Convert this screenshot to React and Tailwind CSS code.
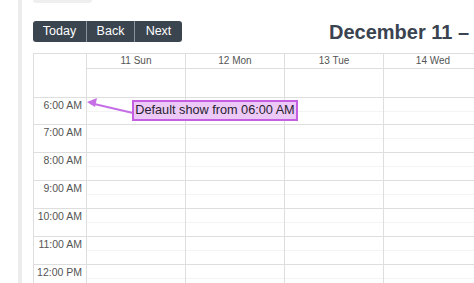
import React from "react";

const days = ["11 Sun", "12 Mon", "13 Tue", "14 Wed"];
const hours = ["6:00 AM", "7:00 AM", "8:00 AM", "9:00 AM", "10:00 AM", "11:00 AM", "12:00 PM"];

export default function App() {
  return (
    <div
      className="relative flex h-[283px] w-[474px] overflow-hidden bg-white"
      style={{ fontFamily: '"Liberation Sans", Arial, sans-serif' }}
    >
      <div className="w-[18px] shrink-0" />
      <div className="w-[4px] shrink-0 bg-[#ececec]" />
      <div className="w-[11px] shrink-0" />

      <div className="min-w-0 flex-1 overflow-hidden">
        <div className="h-[3px] w-[59px] rounded-b bg-[#efefef]" />

        {/* Toolbar */}
        <div className="mt-[18px] flex h-[21px] items-center">
          <div className="flex h-[21px] shrink-0 overflow-hidden rounded-[3px] bg-[#3b4550] text-[12.5px] text-white">
            <button className="w-[54px] shrink-0 border-r border-[#8a939c]">Today</button>
            <button className="w-[48px] shrink-0 border-r border-[#8a939c]">Back</button>
            <button className="w-[47px] shrink-0">Next</button>
          </div>
          <h1 className="ml-[147px] shrink-0 whitespace-nowrap text-[20px] font-bold text-[#3a4350]">
            December 11 – 17
          </h1>
        </div>

        {/* Calendar */}
        <div className="mt-[11px] w-[560px] border-l border-t border-[#dedede]">
          <div className="flex">
            <div className="w-[53px] shrink-0 border-r border-[#dedede]" />
            {days.map((d) => (
              <div key={d} className="w-[99px] shrink-0 border-r border-[#dedede]">
                <div className="h-[15px] border-b border-[#dedede] text-center text-[10px] leading-[14px] text-[#555]">
                  {d}
                </div>
                <div className="h-[28px]" />
              </div>
            ))}
          </div>

          {hours.map((h, i) => (
            <div
              key={h}
              className={`flex border-t border-[#dedede] ${i === 0 ? "h-[27px]" : "h-[28px]"}`}
            >
              <div className="w-[53px] shrink-0 border-r border-[#dedede] pr-[4px] pt-[2px] text-right text-[10.5px] leading-[11px] text-[#555]">
                {h}
              </div>
              {days.map((d) => (
                <div key={d} className="flex w-[99px] shrink-0 flex-col border-r border-[#dedede]">
                  <div className="h-[14px] border-b border-[#f4f4f4]" />
                  <div className="flex-1" />
                </div>
              ))}
            </div>
          ))}
        </div>
      </div>

      {/* Annotation */}
      <svg className="absolute left-[84px] top-[96px]" width="52" height="22" viewBox="0 0 52 22">
        <line x1="6" y1="7" x2="49" y2="17" stroke="#c56ee6" strokeWidth="2" />
        <polygon points="3,6 13,2 11,11" fill="#c56ee6" />
      </svg>
      <div className="absolute left-[132px] top-[100px] flex h-[21px] w-[166px] items-center justify-center whitespace-nowrap border-2 border-[#c35fe0] bg-[#ecc9f7] text-[12.7px] text-[#2a2230]">
        Default show from 06:00 AM
      </div>
    </div>
  );
}
